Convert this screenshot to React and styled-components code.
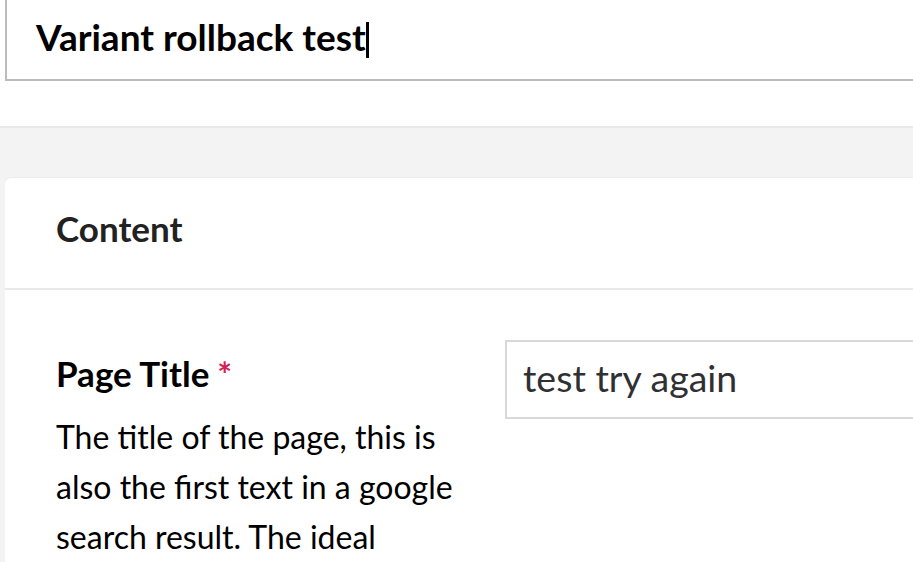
import React from "react";
import styled, { createGlobalStyle } from "styled-components";

const GlobalStyle = createGlobalStyle`
    html, body {
        margin: 0;
        padding: 0;
        background: #f3f3f3;
        font-family: Lato, "Open Sans", sans-serif;
        overflow: hidden;
    }
`;

const Page = styled.div`
    width: 913px;
    height: 562px;
    overflow: hidden;
`;

const Header = styled.header`
    height: 126px;
    background: #fff;
    border-bottom: 2px solid #e9e9e9;
    padding-left: 5px;
    overflow: hidden;
`;

const NameField = styled.div`
    display: flex;
    align-items: center;
    height: 73px;
    padding: 0 0 6px 29px;
    border: 2px solid #bbbbc0;
    border-top: 0;
    border-right: 0;
    font-size: 37px;
    font-weight: 700;
    color: #000;
`;

const Caret = styled.span`
    display: inline-block;
    width: 3px;
    height: 36px;
    background: #000;
    margin-top: 6px;
`;

const Main = styled.main`
    padding: 50px 0 0 5px;
`;

const Card = styled.section`
    background: #fff;
    border-radius: 6px 0 0 0;
    box-shadow: 0 -1px 1px rgba(0, 0, 0, 0.03);
    min-height: 400px;
`;

const CardHeader = styled.div`
    height: 100px;
    display: flex;
    align-items: center;
    padding: 0 0 10px 51px;
    border-bottom: 2px solid #e9e9e9;
    font-size: 35px;
    font-weight: 700;
    color: #222;
`;

const PropertyRow = styled.div`
    display: grid;
    grid-template-columns: 400px 1fr;
    column-gap: 49px;
    padding: 50px 0 0 51px;
`;

const LabelColumn = styled.div`
    padding-top: 13px;
`;

const Label = styled.div`
    font-size: 35px;
    font-weight: 700;
    color: #000;
    line-height: 40px;
`;

const Required = styled.span`
    color: #d42054;
    margin-left: 8px;
`;

const Description = styled.div`
    margin-top: 19px;
    font-size: 32px;
    line-height: 50px;
    color: #000;
`;

const TextInput = styled.div`
    height: 75px;
    display: flex;
    align-items: center;
    padding: 0 0 4px 16px;
    box-sizing: border-box;
    height: 79px;
    border: 2px solid #d8d8d8;
    border-right: 0;
    font-size: 37.5px;
    color: #303033;
`;

function App() {
    return (
        <Page>
            <GlobalStyle />
            <Header>
                <NameField>
                    Variant rollback test
                    <Caret />
                </NameField>
            </Header>
            <Main>
                <Card>
                    <CardHeader>Content</CardHeader>
                    <PropertyRow>
                        <LabelColumn>
                            <Label>
                                Page Title<Required>*</Required>
                            </Label>
                            <Description>
                                The title of the page, this is also the first text in a
                                google search result. The ideal length is between 40 and 60
                                characters
                            </Description>
                        </LabelColumn>
                        <TextInput>test try again</TextInput>
                    </PropertyRow>
                </Card>
            </Main>
        </Page>
    );
}

export default App;
